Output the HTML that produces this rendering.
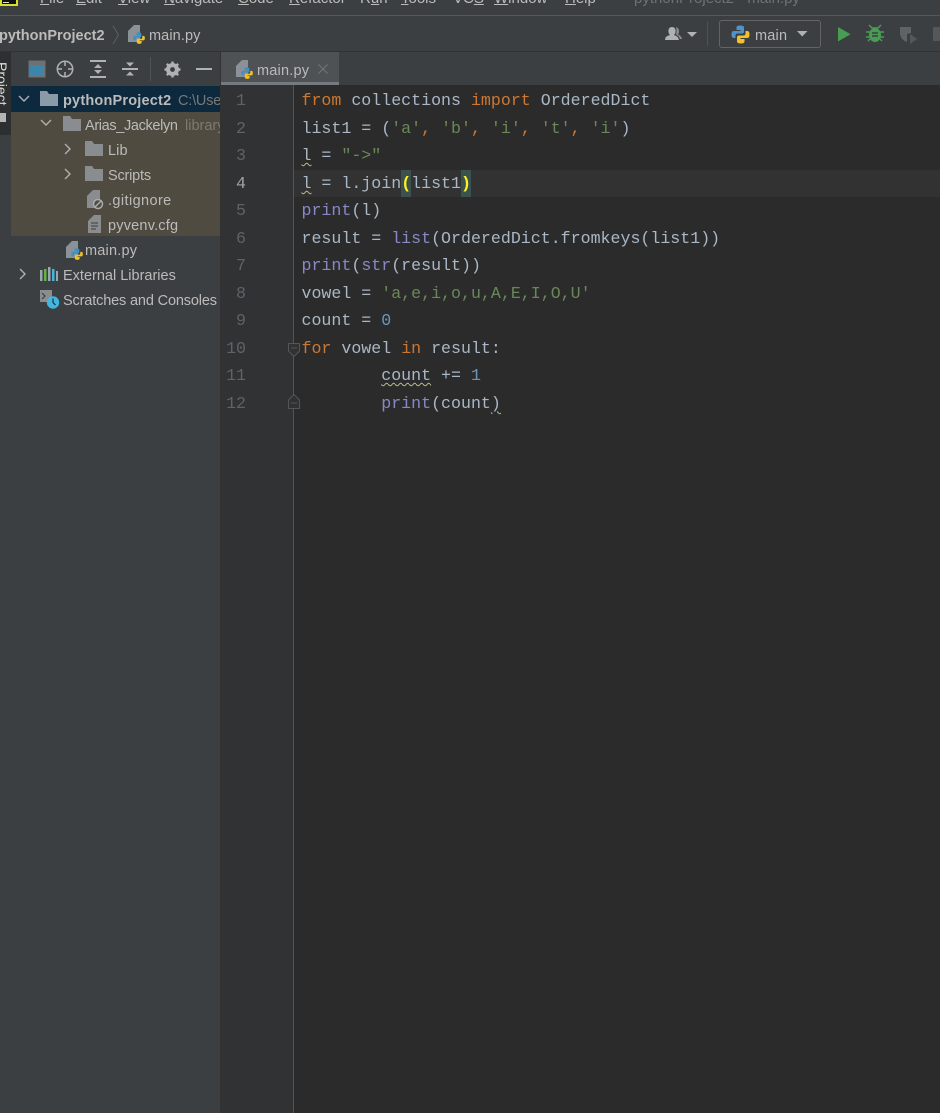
<!DOCTYPE html>
<html><head><meta charset="utf-8">
<style>
html,body{margin:0;padding:0;background:#2b2b2b;}
#r{position:relative;width:940px;height:1113px;overflow:hidden;background:#3c3f41;font-family:"Liberation Sans",sans-serif;color:#bbbbbb;}
.a{position:absolute;white-space:pre;}
.m{font-size:15px;color:#bbb;top:-10px;line-height:18px;}
.m u{text-decoration:underline;}
.t{position:absolute;white-space:pre;font-size:14.5px;line-height:20px;color:#bbb;margin-top:1px;}
.c{position:absolute;left:301.5px;margin-top:1px;white-space:pre;font-family:"Liberation Mono",monospace;font-size:16.63px;line-height:20px;color:#a9b7c6;}
.n{position:absolute;width:26px;text-align:right;left:220px;margin-top:1px;white-space:pre;font-family:"Liberation Mono",monospace;font-size:16.63px;line-height:20px;color:#606366;}
.k{color:#cc7832}.s{color:#6a8759}.b{color:#8888c6}.d{color:#6897bb}
.w{text-decoration:underline wavy #bdbb8c 1px;text-underline-offset:2px;}
svg{position:absolute;overflow:visible;}
</style></head><body><div id="r">

<!-- top menu -->
<div class="a" style="left:0;top:0;width:940px;height:15px;background:#3c3f41;"></div>
<div class="a" style="left:0;top:15px;width:940px;height:1px;background:#555759;"></div>
<div class="a" style="left:0;top:-6px;width:18px;height:12px;background:#111;border:2px solid #d4e02a;box-sizing:border-box;"></div>
<div class="a" style="left:3px;top:2px;width:6px;height:1px;background:#ddd;"></div>
<div class="a m" style="left:40px"><u>F</u>ile</div>
<div class="a m" style="left:76px"><u>E</u>dit</div>
<div class="a m" style="left:118px"><u>V</u>iew</div>
<div class="a m" style="left:164px"><u>N</u>avigate</div>
<div class="a m" style="left:238px"><u>C</u>ode</div>
<div class="a m" style="left:289px"><u>R</u>efactor</div>
<div class="a m" style="left:360px">R<u>u</u>n</div>
<div class="a m" style="left:401px"><u>T</u>ools</div>
<div class="a m" style="left:453px">VC<u>S</u></div>
<div class="a m" style="left:494px"><u>W</u>indow</div>
<div class="a m" style="left:565px"><u>H</u>elp</div>
<div class="a m" style="left:634px;color:#6f7173">pythonProject2 - main.py</div>

<!-- nav bar -->
<div class="a" style="left:0;top:51px;width:940px;height:1px;background:#323232;"></div>
<div class="t" style="left:-1px;top:25px;font-weight:bold;color:#bbb;">pythonProject2</div>
<svg style="left:112px;top:25px" width="8" height="20"><path d="M1 1L6.5 10L1 19" fill="none" stroke="#5d6062" stroke-width="1"/></svg>
<svg style="left:127px;top:24px" width="20" height="20" viewBox="0 0 20 20"><path d="M1 7L7 1H13V18H1Z" fill="#8a9199"/><g transform="translate(6 8) scale(.64)"><path d="M9 0.500Q5.500 .5 5.500 2.500V5H9.500V6H2.500Q.5 6 .5 9.500Q.5 13 2.500 13H4.500V10.500Q4.500 8.500 6.500 8.500H11Q13 8.500 13 6.500V2.500Q13 .5 9 .5Z" fill="#3c90c4"/><path d="M10 18.500Q13.500 18.500 13.500 16.500V14H9.500V13H16.500Q18.500 13 18.500 9.500Q18.500 6 16.500 6H14.500V8.500Q14.500 10.500 12.500 10.500H8Q6 10.500 6 12.500V16.500Q6 18.500 10 18.500Z" fill="#f2c224"/></g></svg>
<div class="t" style="left:149px;top:25px;letter-spacing:.1px;">main.py</div>

<svg style="left:665px;top:26px" width="18" height="16" viewBox="0 0 18 16"><path d="M0 14Q0 10 5 9Q3 7 3.5 4Q4 1 7 1Q10 1 10.5 4Q11 7 9 9Q13 10 14 14Z" fill="#afb1b3"/><path d="M11 1Q14 2 14 5Q14 7 13 8.5Q16 9.5 17 13H15Q14 10 11 8.500Q12 5 11 1Z" fill="#8b8e90"/></svg>
<svg style="left:687px;top:32px" width="11" height="6"><path d="M0 0H10L5 5Z" fill="#afb1b3"/></svg>
<div class="a" style="left:707px;top:22px;width:1px;height:24px;background:#4f5254;"></div>
<div class="a" style="left:719px;top:20px;width:102px;height:28px;border:1px solid #646464;border-radius:3px;box-sizing:border-box;background:#3c3f41;"></div>
<svg style="left:731px;top:25px" width="19" height="19" viewBox="0 0 19 19"><path d="M9 0.500Q5.500 .5 5.500 2.500V5H9.500V6H2.500Q.5 6 .5 9.500Q.5 13 2.500 13H4.500V10.500Q4.500 8.500 6.500 8.500H11Q13 8.500 13 6.500V2.500Q13 .5 9 .5Z" fill="#4f93c8"/><path d="M10 18.500Q13.500 18.500 13.500 16.500V14H9.500V13H16.500Q18.500 13 18.500 9.500Q18.500 6 16.500 6H14.500V8.500Q14.500 10.500 12.500 10.500H8Q6 10.500 6 12.500V16.500Q6 18.500 10 18.500Z" fill="#f0c12c"/></svg>
<div class="t" style="left:755px;top:25px;letter-spacing:.2px;">main</div>
<svg style="left:797px;top:31px" width="11" height="6"><path d="M0 0H10.500L5.200 5.500Z" fill="#afb1b3"/></svg>
<svg style="left:838px;top:27px" width="13" height="15"><path d="M0 0L12.500 7.200L0 14.500Z" fill="#499c54"/></svg>
<svg style="left:866px;top:25px" width="18" height="18" viewBox="0 0 18 18"><path d="M3 0L6 3H12L15 0M0 7H18M0 12H18M2 16L4 14M16 16L14 14" stroke="#499c54" stroke-width="1.500" fill="none"/><ellipse cx="9" cy="10" rx="6" ry="7" fill="#499c54"/><path d="M6 8H12M6 11H12" stroke="#3c3f41" stroke-width="1.500"/></svg>
<svg style="left:899px;top:25px" width="20" height="20" viewBox="0 0 20 20"><path d="M1 2H12V8L8 9V17Q2 15 1 9Z" fill="#606366"/><path d="M11 9L18 14L11 19Z" fill="#55585a"/></svg>
<div class="a" style="left:933px;top:27px;width:7px;height:14px;background:#555759;"></div>

<!-- left stripe -->
<div class="a" style="left:0;top:52px;width:11px;height:1061px;background:#3c3f41;"></div>
<div class="a" style="left:0;top:52px;width:11px;height:83px;background:#2d2f30;"></div>
<div class="a" style="left:-5px;top:62px;color:#ddd;font-size:14px;line-height:14px;writing-mode:vertical-rl;">Project</div>
<div class="a" style="left:0;top:113px;width:6px;height:9px;background:#b5b5b5;"></div>

<!-- project panel -->
<div class="a" style="left:11px;top:52px;width:209px;height:1061px;background:#3c3f41;"></div>
<div class="a" style="left:11px;top:86px;width:209px;height:26px;background:#0d293e;"></div>
<div class="a" style="left:11px;top:112px;width:209px;height:124px;background:#4f4b41;"></div>

<svg style="left:28px;top:60px" width="18" height="18"><rect x=".5" y=".5" width="17" height="17" fill="#6e7072"/><rect x="2" y="5" width="14" height="11" fill="#3d86ab"/></svg>
<svg style="left:56px;top:60px" width="18" height="18" viewBox="0 0 18 18" fill="none" stroke="#afb1b3" stroke-width="1.500"><circle cx="9" cy="9" r="7.700"/><path d="M9 1V6M9 12V17M1 9H6M12 9H17"/></svg>
<svg style="left:90px;top:60px" width="16" height="18" fill="#afb1b3"><rect x="0" y="0" width="16" height="2"/><rect x="0" y="16" width="16" height="2"/><path d="M8 4L12 8H4ZM8 14L4 10H12Z"/></svg>
<svg style="left:122px;top:60px" width="16" height="18" fill="#afb1b3"><rect x="0" y="8" width="16" height="2"/><path d="M8 6.500L4 2.500H12ZM8 11.500L12 15.500H4Z"/></svg>
<div class="a" style="left:150px;top:57px;width:1px;height:24px;background:#515456;"></div>
<svg style="left:164px;top:61px" width="17" height="17" viewBox="0 0 17 17"><circle cx="8.500" cy="8.500" r="4.700" fill="none" stroke="#afb1b3" stroke-width="3.600"/><path d="M8.500 .5V16.500M.5 8.500H16.500M2.800 2.800L14.200 14.200M14.200 2.800L2.800 14.200" stroke="#afb1b3" stroke-width="2.400"/><circle cx="8.500" cy="8.500" r="2.400" fill="#3c3f41"/></svg>
<div class="a" style="left:196px;top:68px;width:16px;height:2px;background:#afb1b3;"></div>

<!-- tree -->
<svg style="left:18px;top:95px" width="12" height="8"><path d="M1 1L6 6L11 1" fill="none" stroke="#afb1b3" stroke-width="1.400"/></svg>
<svg style="left:40px;top:91px" width="19" height="16"><path d="M0 0H7L9 3H18V15H0Z" fill="#8b9aa8"/></svg>
<div class="t" style="left:63px;top:90px;font-weight:bold;letter-spacing:.2px;">pythonProject2</div>
<div class="t" style="left:178px;top:90px;color:#787878;width:42px;overflow:hidden;letter-spacing:-.2px;">C:\Users</div>

<svg style="left:40px;top:119px" width="12" height="8"><path d="M1 1L6 6L11 1" fill="none" stroke="#afb1b3" stroke-width="1.400"/></svg>
<svg style="left:63px;top:116px" width="18" height="15"><path d="M0 0H7L9 3H18V15H0Z" fill="#8a8d8f"/></svg>
<div class="t" style="left:85px;top:115px;letter-spacing:-.35px;">Arias_Jackelyn</div>
<div class="t" style="left:185px;top:115px;color:#7c7a72;width:35px;overflow:hidden;">library</div>

<svg style="left:64px;top:143px" width="8" height="12"><path d="M1 1L6 6L1 11" fill="none" stroke="#afb1b3" stroke-width="1.400"/></svg>
<svg style="left:85px;top:141px" width="18" height="15"><path d="M0 0H7L9 3H18V15H0Z" fill="#8a8d8f"/></svg>
<div class="t" style="left:108px;top:140px;letter-spacing:.1px;">Lib</div>

<svg style="left:64px;top:168px" width="8" height="12"><path d="M1 1L6 6L1 11" fill="none" stroke="#afb1b3" stroke-width="1.400"/></svg>
<svg style="left:85px;top:166px" width="18" height="15"><path d="M0 0H7L9 3H18V15H0Z" fill="#8a8d8f"/></svg>
<div class="t" style="left:108px;top:165px;letter-spacing:-.2px;">Scripts</div>

<svg style="left:87px;top:190px" width="18" height="19" viewBox="0 0 18 19"><path d="M0 6L6 0H13V18H0Z" fill="#8a8d8f"/><circle cx="11" cy="14" r="4.500" fill="#4f4b41" stroke="#a9abad" stroke-width="1.500"/><path d="M8 17L14 11" stroke="#a9abad" stroke-width="1.500"/></svg>
<div class="t" style="left:108px;top:190px;letter-spacing:.4px;">.gitignore</div>

<svg style="left:88px;top:215px" width="14" height="19" viewBox="0 0 14 19"><path d="M0 6L6 0H13V18H0Z" fill="#8a8d8f"/><path d="M3 8H10M3 11H10M3 14H8" stroke="#4f4b41" stroke-width="1.200"/></svg>
<div class="t" style="left:108px;top:215px;letter-spacing:.2px;">pyvenv.cfg</div>

<svg style="left:65px;top:240px" width="20" height="20" viewBox="0 0 20 20"><path d="M1 7L7 1H13V18H1Z" fill="#8a9199"/><g transform="translate(6 8) scale(.64)"><path d="M9 0.500Q5.500 .5 5.500 2.500V5H9.500V6H2.500Q.5 6 .5 9.500Q.5 13 2.500 13H4.500V10.500Q4.500 8.500 6.500 8.500H11Q13 8.500 13 6.500V2.500Q13 .5 9 .5Z" fill="#3c90c4"/><path d="M10 18.500Q13.500 18.500 13.500 16.500V14H9.500V13H16.500Q18.500 13 18.500 9.500Q18.500 6 16.500 6H14.500V8.500Q14.500 10.500 12.500 10.500H8Q6 10.500 6 12.500V16.500Q6 18.500 10 18.500Z" fill="#f2c224"/></g></svg>
<div class="t" style="left:85px;top:240px;letter-spacing:.2px;">main.py</div>

<svg style="left:19px;top:268px" width="8" height="12"><path d="M1 1L6 6L1 11" fill="none" stroke="#afb1b3" stroke-width="1.400"/></svg>
<svg style="left:40px;top:266px" width="18" height="16"><rect x="0" y="4" width="2.500" height="11" fill="#9aa7b0"/><rect x="4" y="3" width="2.500" height="12" fill="#62b543"/><rect x="8" y="1" width="2.500" height="14" fill="#9aa7b0"/><rect x="12" y="3" width="2.500" height="12" fill="#40b6e0"/><rect x="16" y="5" width="2" height="10" fill="#9aa7b0"/></svg>
<div class="t" style="left:63px;top:265px;">External Libraries</div>

<svg style="left:40px;top:290px" width="20" height="20" viewBox="0 0 20 20"><path d="M0 0H12V12H0Z" fill="#8a8d8f"/><path d="M2 3L5 6L2 9" stroke="#3c3f41" stroke-width="1.200" fill="none"/><circle cx="13" cy="12.500" r="6.200" fill="#40b6e0"/><path d="M13 8.500V12.500L15.500 15" stroke="#2b2b2b" stroke-width="1.200" fill="none"/></svg>
<div class="t" style="left:63px;top:290px;letter-spacing:-.15px;">Scratches and Consoles</div>

<!-- divider and editor -->
<div class="a" style="left:220px;top:52px;width:1px;height:1061px;background:#323232;"></div>
<div class="a" style="left:221px;top:52px;width:719px;height:33px;background:#3c3f41;"></div>
<div class="a" style="left:221px;top:52px;width:118px;height:33px;background:#4e5254;"></div>
<div class="a" style="left:221px;top:82px;width:118px;height:3px;background:#747a80;"></div>
<svg style="left:235px;top:59px" width="20" height="20" viewBox="0 0 20 20"><path d="M1 7L7 1H13V18H1Z" fill="#8a9199"/><g transform="translate(6 8) scale(.64)"><path d="M9 0.500Q5.500 .5 5.500 2.500V5H9.500V6H2.500Q.5 6 .5 9.500Q.5 13 2.500 13H4.500V10.500Q4.500 8.500 6.500 8.500H11Q13 8.500 13 6.500V2.500Q13 .5 9 .5Z" fill="#3c90c4"/><path d="M10 18.500Q13.500 18.500 13.500 16.500V14H9.500V13H16.500Q18.500 13 18.500 9.500Q18.500 6 16.500 6H14.500V8.500Q14.500 10.500 12.500 10.500H8Q6 10.500 6 12.500V16.500Q6 18.500 10 18.500Z" fill="#f2c224"/></g></svg>
<div class="t" style="left:257px;top:60px;letter-spacing:.2px;">main.py</div>
<svg style="left:318px;top:64px" width="10" height="10"><path d="M.5 .5L9.500 9.500M9.500 .5L.5 9.500" stroke="#74777a" stroke-width="1"/></svg>

<div class="a" style="left:221px;top:85px;width:719px;height:1028px;background:#2b2b2b;"></div>
<div class="a" style="left:221px;top:85px;width:72px;height:1028px;background:#303234;"></div>
<div class="a" style="left:293px;top:85px;width:1px;height:1028px;background:#555555;"></div>
<div class="a" style="left:294px;top:170px;width:646px;height:27px;background:#323232;"></div>
<div class="a" style="left:401px;top:170px;width:10px;height:27px;background:#3b514d;"></div>
<div class="a" style="left:461px;top:170px;width:10px;height:27px;background:#3b514d;"></div>

<div class="n" style="top:90px">1</div>
<div class="n" style="top:118px">2</div>
<div class="n" style="top:145px">3</div>
<div class="n" style="top:173px;color:#a4a3a3">4</div>
<div class="n" style="top:200px">5</div>
<div class="n" style="top:228px">6</div>
<div class="n" style="top:255px">7</div>
<div class="n" style="top:283px">8</div>
<div class="n" style="top:310px">9</div>
<div class="n" style="top:338px">10</div>
<div class="n" style="top:365px">11</div>
<div class="n" style="top:393px">12</div>

<svg style="left:288px;top:343px" width="12" height="15"><path d="M.5 .5H11.500V8L6 13.500L.5 8Z" fill="#303234" stroke="#555" stroke-width="1"/><path d="M3 5H9" stroke="#555"/></svg>
<svg style="left:288px;top:394px" width="12" height="15"><path d="M.5 14.500H11.500V6L6 .5L.5 6Z" fill="#303234" stroke="#555" stroke-width="1"/><path d="M3 9H9" stroke="#555"/></svg>

<div class="c" style="top:90px"><span class="k">from</span> collections <span class="k">import</span> OrderedDict</div>
<div class="c" style="top:118px">list1 = (<span class="s">'a'</span><span class="k">,</span> <span class="s">'b'</span><span class="k">,</span> <span class="s">'i'</span><span class="k">,</span> <span class="s">'t'</span><span class="k">,</span> <span class="s">'i'</span>)</div>
<div class="c" style="top:145px"><span class="w">l</span> = <span class="s">"-&gt;"</span></div>
<div class="c" style="top:173px"><span class="w">l</span> = l.join<b style="color:#ffef28">(</b>list1<b style="color:#ffef28">)</b></div>
<div class="c" style="top:200px"><span class="b">print</span>(l)</div>
<div class="c" style="top:228px">result = <span class="b">list</span>(OrderedDict.fromkeys(list1))</div>
<div class="c" style="top:255px"><span class="b">print</span>(<span class="b">str</span>(result))</div>
<div class="c" style="top:283px">vowel = <span class="s">'a,e,i,o,u,A,E,I,O,U'</span></div>
<div class="c" style="top:310px">count = <span class="d">0</span></div>
<div class="c" style="top:338px"><span class="k">for</span> vowel <span class="k">in</span> result:</div>
<div class="c" style="top:365px">        <span class="w">count</span> += <span class="d">1</span></div>
<div class="c" style="top:393px">        <span class="b">print</span>(count<span class="w">)</span></div>

</div></body></html>
